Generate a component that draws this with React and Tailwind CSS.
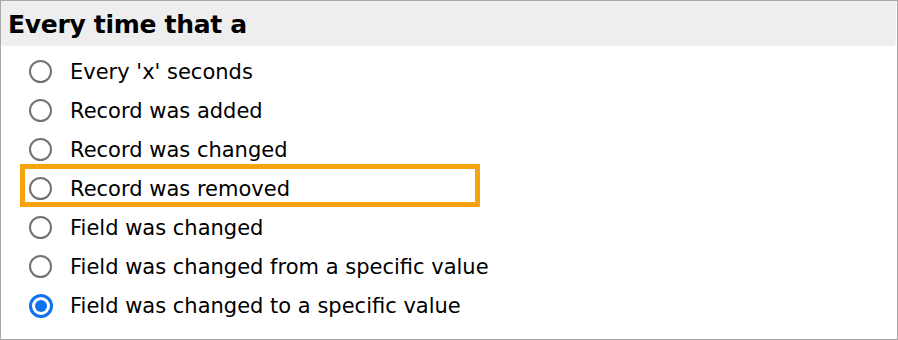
import React from "react";

const options = [
  "Every 'x' seconds",
  "Record was added",
  "Record was changed",
  "Record was removed",
  "Field was changed",
  "Field was changed from a specific value",
  "Field was changed to a specific value",
];

function Radio({ checked }) {
  if (checked) {
    return (
      <span className="flex h-[24px] w-[24px] shrink-0 items-center justify-center rounded-full border-[3px] border-[#0f72ee] bg-white">
        <span className="h-[12px] w-[12px] rounded-full bg-[#0f72ee]" />
      </span>
    );
  }
  return <span className="h-[23px] w-[23px] shrink-0 rounded-full border-2 border-[#727272] bg-white" />;
}

export default function App() {
  return (
    <div
      className="relative h-[340px] w-[898px] overflow-hidden border border-[#a6a6a6] bg-white text-black"
      style={{ fontFamily: '"DejaVu Sans", sans-serif' }}
    >
      <div className="mr-[1px] flex h-[45px] items-center rounded-b-[4px] bg-[#eeeeee] pl-[7px]">
        <span className="translate-y-[1px] text-[25px] font-bold leading-none tracking-[-0.3px]">Every time that a</span>
      </div>
      <div className="pt-[6px]">
        {options.map((label, i) => (
          <div key={label} className="relative flex h-[39px] items-center">
            {i === 3 && (
              <div className="absolute left-[19px] top-[-5px] h-[43px] w-[460px] border-[5px] border-[#f7a30f]" />
            )}
            <span className="flex w-[68px] shrink-0 justify-center pl-[11px]">
              <Radio checked={i === 6} />
            </span>
            <span className="ml-[1px] translate-y-[1px] text-[21px] leading-none">{label}</span>
          </div>
        ))}
      </div>
    </div>
  );
}
